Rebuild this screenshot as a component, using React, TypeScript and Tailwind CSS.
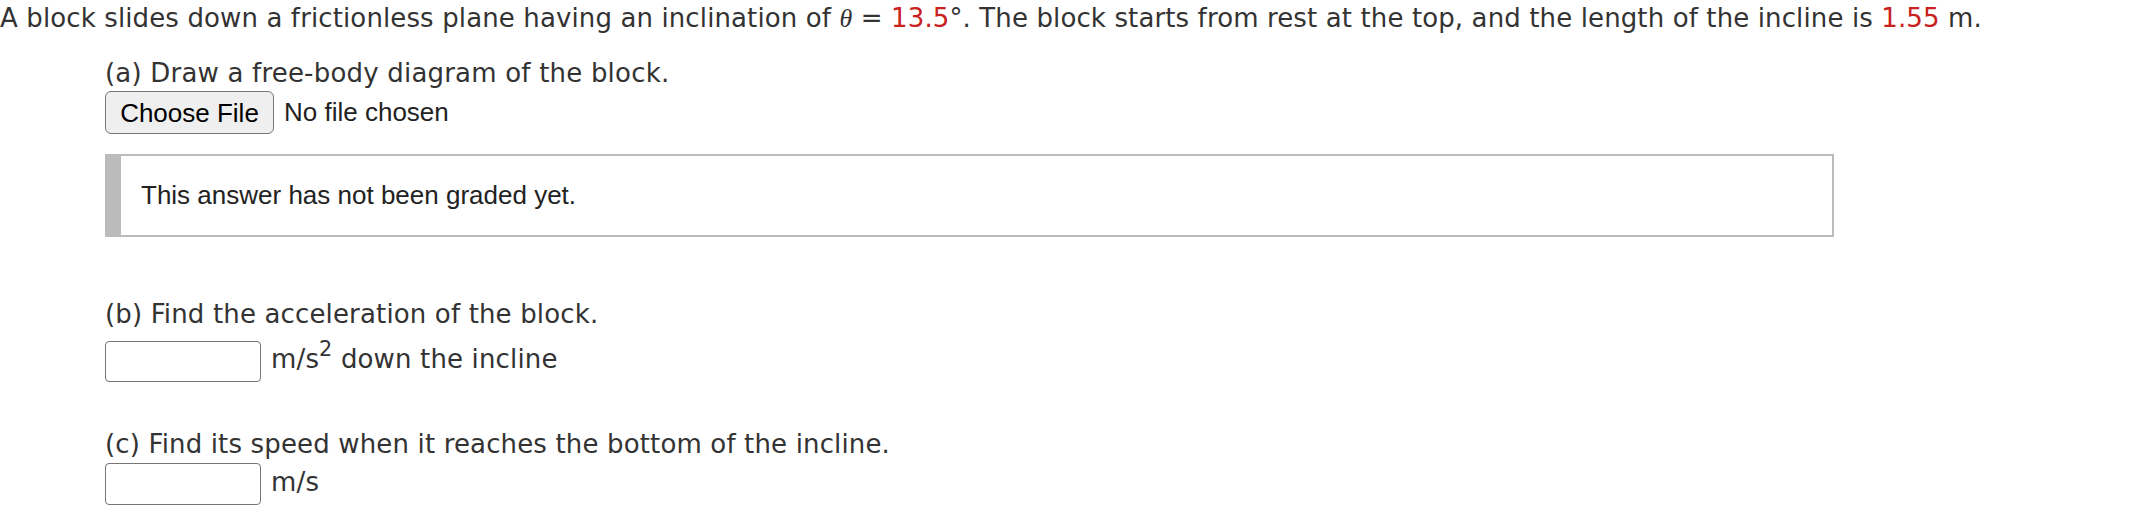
import React from "react";

export default function App() {
  return (
    <div className="min-h-[530px] w-full bg-white font-['DejaVu_Sans',Verdana,sans-serif] text-[26px] tracking-[0.15px] text-[#333]">
      {/* Question stem */}
      <p className="whitespace-nowrap leading-[36px] tracking-[0.12px]">
        A block slides down a frictionless plane having an inclination of{" "}
        <span className="font-['Liberation_Serif',serif] italic">θ</span> = <span className="text-[#c9211e]">13.5</span>°. The block
        starts from rest at the top, and the length of the incline is <span className="text-[#c9211e]">1.55</span> m.
      </p>

      <div className="pl-[105px]">
        {/* Part (a) */}
        <p className="mt-[18px] leading-[36px] tracking-[0.2px]">(a) Draw a free-body diagram of the block.</p>
        <div className="flex items-center gap-[10px] font-['Liberation_Sans',Arial,sans-serif] tracking-normal">
          <button
            type="button"
            className="h-[43px] w-[169px] rounded-[6px] border-[1.5px] border-[#767676] bg-[#efefef] text-center text-[26px] leading-none text-black"
          >
            Choose File
          </button>
          <span className="text-[26px] text-[#222]">No file chosen</span>
        </div>

        <div className="mt-[20px] flex h-[83px] w-[1729px] border-2 border-l-[16px] border-[#bbbbbb] bg-white">
          <div className="flex items-center pl-[20px] font-['Liberation_Sans',Arial,sans-serif] text-[26px] tracking-normal text-[#222]">
            This answer has not been graded yet.
          </div>
        </div>

        {/* Part (b) */}
        <p className="mt-[59px] leading-[36px]">(b) Find the acceleration of the block.</p>
        <div className="mt-[9px] flex items-center gap-[10px]">
          <input
            type="text"
            className="h-[41px] w-[156px] rounded-[4px] border-[1.5px] border-[#767676] bg-white"
          />
          <span className="pb-[5px] leading-[36px]">
            m/s<sup className="-top-[0.6em] text-[0.8em]">2</sup> down the incline
          </span>
        </div>

        {/* Part (c) */}
        <p className="mt-[44px] leading-[36px]">(c) Find its speed when it reaches the bottom of the incline.</p>
        <div className="mt-px flex items-center gap-[10px]">
          <input
            type="text"
            className="h-[42px] w-[156px] rounded-[4px] border-[1.5px] border-[#767676] bg-white"
          />
          <span className="pb-[4px] leading-[36px]">m/s</span>
        </div>
      </div>
    </div>
  );
}
